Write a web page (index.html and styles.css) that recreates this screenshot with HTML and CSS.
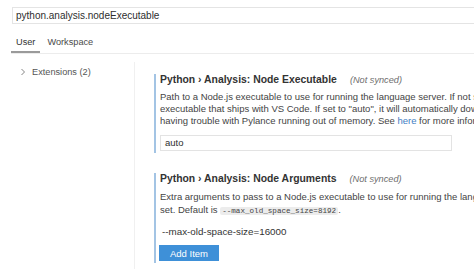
FILE: index.html
```html
<!DOCTYPE html>
<html lang="en">
<head>
  <meta charset="UTF-8" />
  <title>Settings</title>
  <link rel="stylesheet" href="styles.css">
</head>
<body>

<div class="search">python.analysis.nodeExecutable</div>

<div class="tabs">
  <span class="tab active">User</span>
  <span class="tab">Workspace</span>
</div>

<div class="main">
  <aside class="toc">
    <div class="toc-item">
      <svg class="chev" width="6" height="8" viewBox="0 0 6 8"><path d="M1.5 1 L4.5 4 L1.5 7" fill="none" stroke="#777" stroke-width="0.9"/></svg>
      Extensions (2)
    </div>
  </aside>

  <section class="settings">
    <div class="setting">
      <div class="title"><b>Python › Analysis: Node Executable</b><i>(Not synced)</i></div>
      <div class="desc">
        <div>Path to a Node.js executable to use for running the language server. If not specified, the language server will use the Node.js</div>
        <div>executable that ships with VS Code. If set to "auto", it will automatically download Node.js and use it if the user is</div>
        <div>having trouble with Pylance running out of memory. See <a href="#">here</a> for more information.</div>
      </div>
      <div class="input">auto</div>
    </div>

    <div class="setting">
      <div class="title"><b>Python › Analysis: Node Arguments</b><i>(Not synced)</i></div>
      <div class="desc desc-code">
        <div>Extra arguments to pass to a Node.js executable to use for running the language server. These arguments only apply when</div>
        <div>set. Default is <code>--max_old_space_size=8192</code>.</div>
      </div>
      <div class="value">--max-old-space-size=16000</div>
      <button class="add">Add Item</button>
    </div>
  </section>
</div>

</body>
</html>
```

FILE: styles.css
```css
body {
  margin: 0;
  background: #fff;
  color: #3b3b3b;
  font-family: 'Liberation Sans', Arial, sans-serif;
  font-size: 9.2px;
  overflow: hidden;
  width: 474px;
  height: 269px;
}
.search {
  margin: 7px 0 0 12px;
  height: 15px;
  line-height: 15px;
  padding-left: 3px;
  border: 1px solid #e4e4e4;
  border-right: none;
  font-size: 10px;
  color: #2e2e2e;
}
.tabs {
  display: flex;
  gap: 2px;
  margin-left: 11px;
  border-bottom: 1px solid #ececec;
}
.tab {
  padding: 12px 5px 3px;
  line-height: 12px;
  border-bottom: 2px solid transparent;
  color: #4a4a4a;
}
.tab.active {
  border-bottom-color: #9a9a9a;
  color: #333;
}
.main {
  display: flex;
  align-items: flex-start;
}
.toc {
  width: 134px;
  flex: none;
  margin-top: 8px;
  height: 210px;
  border-right: 1px solid #f0f0f0;
}
.toc-item {
  display: flex;
  align-items: center;
  padding: 4px 0 0 20px;
  line-height: 12px;
  color: #555;
}
.chev {
  margin-right: 6px;
}
.settings {
  margin-left: 19px;
  padding-top: 20px;
  white-space: nowrap;
}
.setting {
  border-left: 2px solid #a3c4e4;
  padding: 0 0 2px 4px;
}
.setting + .setting {
  margin-top: 20px;
}
.title {
  line-height: 11px;
  color: #333;
}
.title b {
  font-size: 10.4px;
}
.title i {
  margin-left: 13px;
  color: #6e6e6e;
}
.desc {
  margin-top: 5px;
  line-height: 12px;
  font-size: 9.5px;
  color: #444;
}
.desc a {
  color: #3f7ec4;
  text-decoration: none;
}
.desc-code {
  margin-top: 4.5px;
  line-height: 13px;
}
code {
  font-family: 'Liberation Mono', monospace;
  font-size: 7.6px;
  background: #ececec;
  padding: 0 2px;
  border-radius: 2px;
}
.input {
  margin-top: 8px;
  width: 286px;
  height: 14px;
  line-height: 14px;
  padding-left: 4px;
  border: 1px solid #e3e3e3;
  font-size: 9.5px;
  color: #2e2e2e;
}
.value {
  margin-top: 8.5px;
  padding-left: 2px;
  line-height: 12px;
  font-size: 9.8px;
  color: #333;
}
.add {
  display: block;
  margin: 7px 0 0 -1px;
  height: 16px;
  padding: 0 11px;
  border: none;
  background: #3e90d8;
  color: #fff;
  font-family: inherit;
  font-size: 9.5px;
}
```
